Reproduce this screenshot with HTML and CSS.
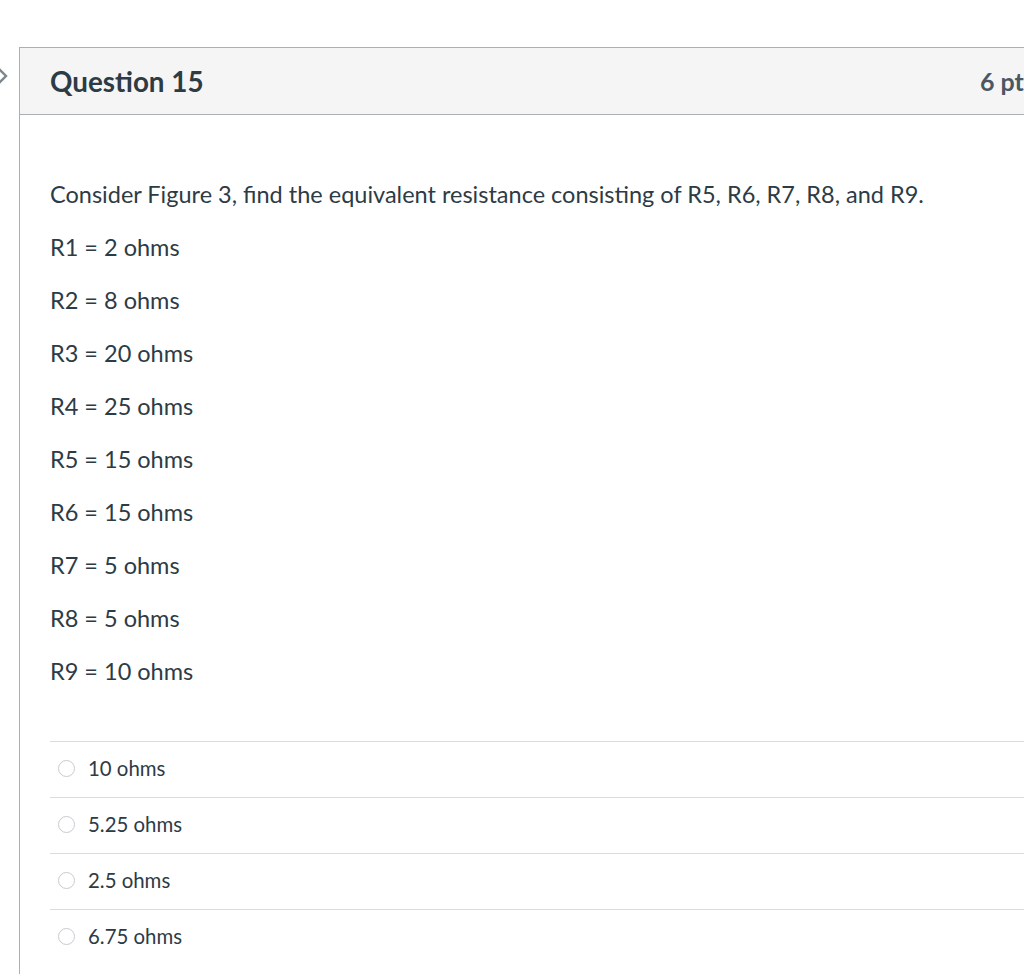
FILE: index.html
```html
<!DOCTYPE html>
<html>
<head>
<meta charset="utf-8">
<link rel="stylesheet" href="styles.css">
</head>
<body>
<div class="page">
  <div class="nav-arrow">
    <svg width="10" height="20" viewBox="0 0 10 20"><path d="M-2 2 L6 10 L-2 18" fill="none" stroke="#7d878e" stroke-width="2.4"/></svg>
  </div>
  <div class="card">
    <div class="card-header">
      <h2 class="title">Question 15</h2>
      <span class="points">6 pts</span>
    </div>
    <div class="card-body">
      <div class="question-text">
        <p>Consider Figure 3, find the equivalent resistance consisting of R5, R6, R7, R8, and R9.</p>
        <p>R1 = 2 ohms</p>
        <p>R2 = 8 ohms</p>
        <p>R3 = 20 ohms</p>
        <p>R4 = 25 ohms</p>
        <p>R5 = 15 ohms</p>
        <p>R6 = 15 ohms</p>
        <p>R7 = 5 ohms</p>
        <p>R8 = 5 ohms</p>
        <p>R9 = 10 ohms</p>
      </div>
      <div class="answers">
        <label class="answer"><span class="radio"></span><span class="answer-text">10 ohms</span></label>
        <label class="answer"><span class="radio"></span><span class="answer-text">5.25 ohms</span></label>
        <label class="answer"><span class="radio"></span><span class="answer-text">2.5 ohms</span></label>
        <label class="answer"><span class="radio"></span><span class="answer-text">6.75 ohms</span></label>
      </div>
    </div>
  </div>
</div>
</body>
</html>
```
FILE: styles.css
```css
html, body {
  margin: 0;
  padding: 0;
  background: #fff;
  overflow: hidden;
}
body {
  font-family: Lato, "Open Sans", sans-serif;
  color: #2d3b45;
  width: 1024px;
  height: 974px;
}
.page {
  position: relative;
  padding: 47px 0 0 19px;
}
.nav-arrow {
  position: absolute;
  left: 0;
  top: 66px;
  width: 10px;
  height: 20px;
}
.card {
  width: 1060px;
  border: 1px solid #a9b0b5;
  border-bottom: none;
  min-height: 960px;
}
.card-header {
  display: flex;
  align-items: center;
  height: 66px;
  background: #f5f5f5;
  border-bottom: 1px solid #a9b0b5;
  padding: 0 0 0 30px;
}
.title {
  margin: 0;
  font-size: 27.8px;
  font-weight: 700;
  color: #2d3b45;
  flex: 1;
}
.points {
  font-size: 25px;
  font-weight: 700;
  color: #4a5863;
  width: 100px;
  white-space: nowrap;
}
.card-body {
  padding: 64px 0 0 30px;
}
.question-text p {
  margin: 0 0 23px;
  font-size: 23.5px;
  line-height: 30px;
}
.answers {
  margin-top: 55px;
}
.answer {
  display: flex;
  align-items: center;
  height: 52px;
  padding-bottom: 3px;
  border-top: 1px solid #dadddf;
}
.radio {
  width: 17px;
  height: 17px;
  border: 1px solid #c6cbcf;
  border-radius: 50%;
  margin: 0 13px 0 8px;
  background: #fff;
  box-sizing: border-box;
}
.answer-text {
  font-size: 20.4px;
}
```
